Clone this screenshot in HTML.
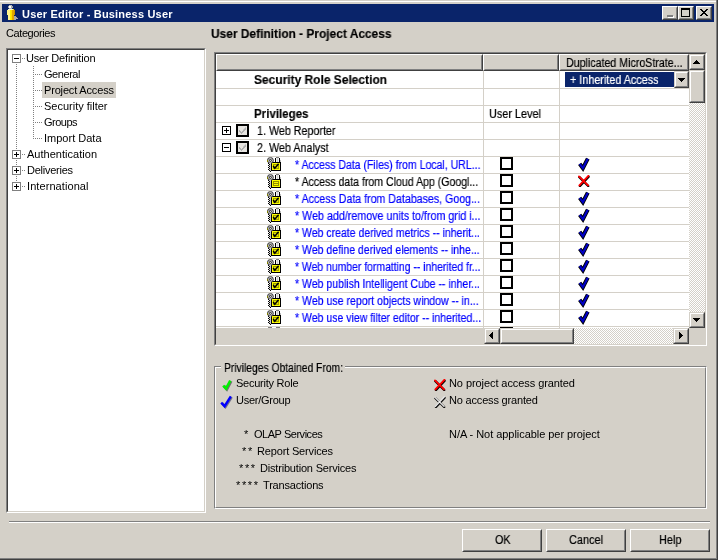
<!DOCTYPE html>
<html><head><meta charset="utf-8"><title>User Editor - Business User</title>
<style>
html,body{margin:0;padding:0;background:#fff;}
body{width:721px;height:560px;overflow:hidden;position:relative;font-family:"Liberation Sans",sans-serif;font-size:11px;color:#000;}
div,span,svg{position:absolute;box-sizing:border-box;}
.t{white-space:pre;line-height:16px;height:16px;will-change:transform;}
.ms{font-size:12.5px;-webkit-text-stroke:0.2px;}
.b{font-weight:bold;-webkit-text-stroke:0;}
.ms.b{-webkit-text-stroke:0.15px;}
.sunk{border:1px solid;border-color:#808080 #ffffff #ffffff #808080;}
.sunk>.in{left:0;top:0;right:0;bottom:0;border:1px solid;border-color:#404040 #d4d0c8 #d4d0c8 #404040;background:#fff;}
.btn{background:#d4d0c8;border:1px solid;border-color:#ffffff #404040 #404040 #ffffff;}
.btn>.in{left:0;top:0;right:0;bottom:0;border:1px solid;border-color:#d4d0c8 #808080 #808080 #d4d0c8;}
.sb{background:#d4d0c8;border:1px solid;border-color:#d4d0c8 #404040 #404040 #d4d0c8;}
.sb>.in{left:0;top:0;right:0;bottom:0;border:1px solid;border-color:#ffffff #808080 #808080 #ffffff;}
.trk{background:repeating-conic-gradient(#ffffff 0% 25%,#d4d0c8 0% 50%) 0 0/2px 2px;}
.hl{background:#d4d0c8;}
.vd{width:1px;background:repeating-linear-gradient(to bottom,#808080 0 1px,transparent 1px 2px);}
.hd{height:1px;background:repeating-linear-gradient(to right,#808080 0 1px,transparent 1px 2px);}
.gl{background:#d4d0c8;}
.hc{background:#d4d0c8;border:1px solid;border-color:#ffffff #404040 #404040 #ffffff;}
.hc>.in{left:0;top:0;right:0;bottom:0;border:1px solid;border-color:#d4d0c8 #808080 #808080 #d4d0c8;}
.cb{width:13px;height:13px;border:2px solid #000;background:#fff;}
.pm{width:9px;height:9px;border:1px solid #808080;background:#fff;}
.pm i{position:absolute;background:#000;}
.blue{color:#0000ff;}
</style></head>
<body>
<div style="left:0;top:0;width:718px;height:560px;background:#d4d0c8;"></div>
<div style="left:0;top:1px;width:716px;height:1px;background:#ffffff;"></div>
<div style="left:716px;top:0;width:1px;height:559px;background:#808080;"></div>
<div style="left:717px;top:0;width:1px;height:560px;background:#404040;"></div>
<div style="left:0;top:558px;width:717px;height:1px;background:#808080;"></div>
<div style="left:0;top:559px;width:718px;height:1px;background:#404040;"></div>
<div style="left:2px;top:4px;width:712px;height:18px;background:#0a246a;"></div>
<svg style="left:6px;top:4px" width="14" height="18" viewBox="0 0 14 18" shape-rendering="crispEdges">
<rect x="2" y="5" width="6" height="11" fill="#ffe000"/>
<rect x="2" y="5" width="2" height="11" fill="#fff48a"/>
<rect x="4" y="6" width="1" height="10" fill="#fff000"/>
<rect x="6" y="6" width="2" height="10" fill="#e0a800"/>
<rect x="1" y="6" width="1" height="5" fill="#fff48a"/>
<rect x="8" y="6" width="1" height="5" fill="#c89000"/>
<rect x="2" y="5" width="5" height="1" fill="#fffbd0"/>
<rect x="3" y="1" width="3" height="4" fill="#b8b8b8"/>
<rect x="2" y="2" width="5" height="2" fill="#a8a8a8"/>
<rect x="3" y="2" width="2" height="2" fill="#ffffff"/>
<path d="M8 12h1v4h-1zM9 12h1v4h-1zM10 13h1v2h-1zM11 13.5h1v1h-1z" fill="#a8a8a8"/>
</svg>
<div class="t b" style="left:22px;top:6px;color:#fff;letter-spacing:0.192px;">User Editor - Business User</div>
<div class="btn" style="left:662px;top:6px;width:16px;height:14px;"><div class="in"></div><div style="left:5px;top:9px;width:6px;height:2px;background:#ffffff;"></div><div style="left:4px;top:8px;width:6px;height:2px;background:#808080;"></div></div>
<div class="btn" style="left:678px;top:6px;width:16px;height:14px;"><div class="in"></div><div style="left:2px;top:1px;width:9px;height:9px;border:1px solid #000;border-top-width:2px;"></div></div>
<div class="btn" style="left:696px;top:6px;width:16px;height:14px;"><div class="in"></div><svg style="left:3px;top:2px" width="8" height="7" viewBox="0 0 8 7" shape-rendering="crispEdges"><path d="M0 0h2v1h-2zM6 0h2v1h-2zM1 1h2v1h-2zM5 1h2v1h-2zM2 2h4v1h-4zM3 3h2v1h-2zM2 4h4v1h-4zM1 5h2v1h-2zM5 5h2v1h-2zM0 6h2v1h-2zM6 6h2v1h-2z" fill="#000"/></svg></div>
<div class="t " style="left:6.2px;top:25px;letter-spacing:-0.411px;">Categories</div>
<div class="sunk" style="left:6px;top:48px;width:200px;height:465px;"><div class="in"></div></div>
<div class="vd" style="left:16px;top:64px;height:122px;"></div>
<div class="vd" style="left:33px;top:66px;height:73px;"></div>
<div class="hd" style="left:22px;top:58px;width:4px;"></div>
<div class="hd" style="left:35px;top:74px;width:8px;"></div>
<div class="hd" style="left:35px;top:90px;width:8px;"></div>
<div class="hd" style="left:35px;top:106px;width:8px;"></div>
<div class="hd" style="left:35px;top:122px;width:8px;"></div>
<div class="hd" style="left:35px;top:138px;width:8px;"></div>
<div class="hd" style="left:22px;top:154px;width:4px;"></div>
<div class="hd" style="left:22px;top:170px;width:4px;"></div>
<div class="hd" style="left:22px;top:186px;width:4px;"></div>
<div class="pm" style="left:12px;top:54px;border-color:#808080;"><i style="left:1px;top:3px;width:5px;height:1px;"></i></div>
<div class="pm" style="left:12px;top:150px;border-color:#808080;"><i style="left:1px;top:3px;width:5px;height:1px;"></i><i style="left:3px;top:1px;width:1px;height:5px;"></i></div>
<div class="pm" style="left:12px;top:166px;border-color:#808080;"><i style="left:1px;top:3px;width:5px;height:1px;"></i><i style="left:3px;top:1px;width:1px;height:5px;"></i></div>
<div class="pm" style="left:12px;top:182px;border-color:#808080;"><i style="left:1px;top:3px;width:5px;height:1px;"></i><i style="left:3px;top:1px;width:1px;height:5px;"></i></div>
<div class="hl" style="left:42px;top:82px;width:74px;height:16px;"></div>
<div class="t " style="left:26px;top:50px;letter-spacing:-0.189px;">User Definition</div>
<div class="t " style="left:44px;top:66px;letter-spacing:-0.440px;">General</div>
<div class="t " style="left:44px;top:82px;letter-spacing:-0.165px;">Project Access</div>
<div class="t " style="left:44px;top:98px;letter-spacing:-0.006px;">Security filter</div>
<div class="t " style="left:44px;top:114px;letter-spacing:-0.516px;">Groups</div>
<div class="t " style="left:44px;top:130px;letter-spacing:0.003px;">Import Data</div>
<div class="t " style="left:26.5px;top:146px;letter-spacing:0.022px;">Authentication</div>
<div class="t " style="left:26.5px;top:162px;letter-spacing:-0.255px;">Deliveries</div>
<div class="t " style="left:26.5px;top:178px;letter-spacing:0.079px;">International</div>
<div class="t ms b" style="left:211px;top:26px;transform:scaleX(0.9541);transform-origin:0 0;">User Definition - Project Access</div>
<div class="sunk" style="left:214px;top:52px;width:493px;height:294px;"><div class="in"></div></div>
<div class="hc" style="left:216px;top:54px;width:267px;height:17px;"><div class="in"></div></div>
<div class="hc" style="left:483px;top:54px;width:76px;height:17px;"><div class="in"></div></div>
<div class="hc" style="left:559px;top:54px;width:130px;height:17px;"><div class="in"></div></div>
<div class="t ms" style="left:566px;top:55px;transform:scaleX(0.8512);transform-origin:0 0;">Duplicated MicroStrate...</div>
<div class="gl" style="left:216px;top:88px;width:473px;height:1px;"></div>
<div class="gl" style="left:216px;top:105px;width:473px;height:1px;"></div>
<div class="gl" style="left:216px;top:122px;width:473px;height:1px;"></div>
<div class="gl" style="left:216px;top:139px;width:473px;height:1px;"></div>
<div class="gl" style="left:216px;top:156px;width:473px;height:1px;"></div>
<div class="gl" style="left:216px;top:173px;width:473px;height:1px;"></div>
<div class="gl" style="left:216px;top:190px;width:473px;height:1px;"></div>
<div class="gl" style="left:216px;top:207px;width:473px;height:1px;"></div>
<div class="gl" style="left:216px;top:224px;width:473px;height:1px;"></div>
<div class="gl" style="left:216px;top:241px;width:473px;height:1px;"></div>
<div class="gl" style="left:216px;top:258px;width:473px;height:1px;"></div>
<div class="gl" style="left:216px;top:275px;width:473px;height:1px;"></div>
<div class="gl" style="left:216px;top:292px;width:473px;height:1px;"></div>
<div class="gl" style="left:216px;top:309px;width:473px;height:1px;"></div>
<div class="gl" style="left:216px;top:326px;width:473px;height:1px;"></div>
<div class="gl" style="left:483px;top:71px;width:1px;height:257px;"></div>
<div class="gl" style="left:559px;top:71px;width:1px;height:257px;"></div>
<div style="left:216px;top:328px;width:489px;height:16px;background:#d4d0c8;"></div>
<div class="t ms b" style="left:254px;top:72px;transform:scaleX(0.9573);transform-origin:0 0;">Security Role Selection</div>
<div style="left:565px;top:72px;width:109px;height:15px;background:#0a246a;"></div>
<div class="t ms" style="left:570px;top:72px;color:#fff;transform:scaleX(0.8634);transform-origin:0 0;">+ Inherited Access</div>
<div class="sb" style="left:674px;top:71px;width:15px;height:17px;"><div class="in"></div><svg style="left:3px;top:6px" width="7" height="4" viewBox="0 0 7 4" shape-rendering="crispEdges"><path d="M0 0h7v1h-7zM1 1h5v1h-5zM2 2h3v1h-3zM3 3h1v1h-1z" fill="#000"/></svg></div>
<div class="t ms b" style="left:254px;top:106px;transform:scaleX(0.9225);transform-origin:0 0;">Privileges</div>
<div class="t ms" style="left:489px;top:106px;transform:scaleX(0.8703);transform-origin:0 0;">User Level</div>
<div class="pm" style="left:222px;top:126px;border-color:#000;"><i style="left:1px;top:3px;width:5px;height:1px;"></i><i style="left:3px;top:1px;width:1px;height:5px;"></i></div>
<div style="left:236px;top:124px;width:13px;height:13px;border:2px solid #000;background:#e6e4e0;"><svg style="left:1px;top:1px" width="7" height="7" viewBox="0 0 7 7" shape-rendering="crispEdges"><path d="M0 3h1v2h-1zM1 4h1v2h-1zM2 5h1v2h-1zM3 4h1v2h-1zM4 3h1v2h-1zM5 2h1v2h-1zM6 1h1v2h-1z" fill="#b0b0b0"/><path d="M6 0h1v1h-1zM5 1h1v1h-1zM4 2h1v1h-1z" fill="#c8c8c8"/></svg></div>
<div class="t ms" style="left:257px;top:123px;transform:scaleX(0.8581);transform-origin:0 0;">1. Web Reporter</div>
<div class="pm" style="left:222px;top:143px;border-color:#000;"><i style="left:1px;top:3px;width:5px;height:1px;"></i></div>
<div style="left:236px;top:141px;width:13px;height:13px;border:2px solid #000;background:#e6e4e0;"><svg style="left:1px;top:1px" width="7" height="7" viewBox="0 0 7 7" shape-rendering="crispEdges"><path d="M0 3h1v2h-1zM1 4h1v2h-1zM2 5h1v2h-1zM3 4h1v2h-1zM4 3h1v2h-1zM5 2h1v2h-1zM6 1h1v2h-1z" fill="#b0b0b0"/><path d="M6 0h1v1h-1zM5 1h1v1h-1zM4 2h1v1h-1z" fill="#c8c8c8"/></svg></div>
<div class="t ms" style="left:257px;top:140px;transform:scaleX(0.8598);transform-origin:0 0;">2. Web Analyst</div>
<svg style="left:267px;top:156px" width="16" height="16" viewBox="0 0 16 16" shape-rendering="crispEdges">
<rect x="9" y="2" width="3" height="5" fill="#f4f4f4"/><rect x="10" y="2" width="1" height="4" fill="#d0d0d0"/>
<rect x="9" y="1" width="3" height="1" fill="#808080"/>
<rect x="8" y="2" width="1" height="5" fill="#000"/><rect x="12" y="2" width="1" height="5" fill="#000"/><rect x="13" y="4" width="1" height="3" fill="#c0c0c0"/>
<rect x="4" y="6" width="10" height="9" fill="#000"/>
<rect x="5" y="7" width="8" height="7" fill="#ffff00"/>
<rect x="6.5" y="8.5" width="5" height="4" fill="#e8e800" stroke="#a0a000" stroke-width="1"/><path d="M6.2 10 L7.8 12.2 L11.6 7.8" fill="none" stroke="#000" stroke-width="1.5" shape-rendering="auto"/>
<g shape-rendering="auto"><circle cx="3.4" cy="4.4" r="2.9" fill="#c8c8c8" stroke="#202020" stroke-width="0.9"/><circle cx="3.4" cy="4.4" r="1.0" fill="#fff" stroke="#000" stroke-width="0.8"/></g>
<rect x="2" y="1" width="3" height="1" fill="#808080"/>
<rect x="0" y="4" width="1" height="2" fill="#808000"/>
<rect x="2" y="7" width="2" height="8" fill="#c8c8c8"/>
<path d="M1 7h1v1h-1zM2 8h1v1h-1zM1 9h1v1h-1zM2 10h1v1h-1zM1 11h1v1h-1zM2 12h1v1h-1zM1 13h1v1h-1zM2 14h1v1h-1zM3 15h1v1h-1z" fill="#000"/>
</svg>
<div class="t ms blue" style="left:294.6px;top:157px;transform:scaleX(0.8424);transform-origin:0 0;">* Access Data (Files) from Local, URL...</div>
<div class="cb" style="left:500px;top:157px;"></div>
<svg style="left:577.5px;top:157.3px" width="13" height="15" viewBox="0 0 13 15"><path d="M1.7 6.9 L4.9 11.2 L9.8 1.7" fill="none" stroke="#000" stroke-width="4.0" stroke-linejoin="miter" stroke-miterlimit="3"/><path d="M1.7 6.9 L4.9 11.2 L9.8 1.7" fill="none" stroke="#0000c4" stroke-width="2.2" stroke-linejoin="miter" stroke-miterlimit="3"/></svg>
<svg style="left:267px;top:173px" width="16" height="16" viewBox="0 0 16 16" shape-rendering="crispEdges">
<rect x="9" y="2" width="3" height="5" fill="#f4f4f4"/><rect x="10" y="2" width="1" height="4" fill="#d0d0d0"/>
<rect x="9" y="1" width="3" height="1" fill="#808080"/>
<rect x="8" y="2" width="1" height="5" fill="#000"/><rect x="12" y="2" width="1" height="5" fill="#000"/><rect x="13" y="4" width="1" height="3" fill="#c0c0c0"/>
<rect x="4" y="6" width="10" height="9" fill="#000"/>
<rect x="5" y="7" width="8" height="7" fill="#ffff00"/>
<rect x="6.5" y="8.5" width="5" height="4" fill="#ffff00" stroke="#909000" stroke-width="1"/><rect x="7" y="10" width="4" height="1" fill="#909000"/>
<g shape-rendering="auto"><circle cx="3.4" cy="4.4" r="2.9" fill="#c8c8c8" stroke="#202020" stroke-width="0.9"/><circle cx="3.4" cy="4.4" r="1.0" fill="#fff" stroke="#000" stroke-width="0.8"/></g>
<rect x="2" y="1" width="3" height="1" fill="#808080"/>
<rect x="0" y="4" width="1" height="2" fill="#808000"/>
<rect x="2" y="7" width="2" height="8" fill="#c8c8c8"/>
<path d="M1 7h1v1h-1zM2 8h1v1h-1zM1 9h1v1h-1zM2 10h1v1h-1zM1 11h1v1h-1zM2 12h1v1h-1zM1 13h1v1h-1zM2 14h1v1h-1zM3 15h1v1h-1z" fill="#000"/>
</svg>
<div class="t ms" style="left:294.6px;top:174px;transform:scaleX(0.8451);transform-origin:0 0;">* Access data from Cloud App (Googl...</div>
<div class="cb" style="left:500px;top:174px;"></div>
<svg style="left:577.5px;top:175px" width="12" height="12" viewBox="0 0 12 12">
<path d="M1.4 2.2 L10.2 11 M10.6 1.8 L2 11" stroke="#000" stroke-width="2.4" stroke-linecap="round"/>
<path d="M1 1.4 L10 10.4 M10.4 0.8 L1.4 10.4" stroke="#ff0000" stroke-width="1.9" stroke-linecap="round"/></svg>
<svg style="left:267px;top:190px" width="16" height="16" viewBox="0 0 16 16" shape-rendering="crispEdges">
<rect x="9" y="2" width="3" height="5" fill="#f4f4f4"/><rect x="10" y="2" width="1" height="4" fill="#d0d0d0"/>
<rect x="9" y="1" width="3" height="1" fill="#808080"/>
<rect x="8" y="2" width="1" height="5" fill="#000"/><rect x="12" y="2" width="1" height="5" fill="#000"/><rect x="13" y="4" width="1" height="3" fill="#c0c0c0"/>
<rect x="4" y="6" width="10" height="9" fill="#000"/>
<rect x="5" y="7" width="8" height="7" fill="#ffff00"/>
<rect x="6.5" y="8.5" width="5" height="4" fill="#e8e800" stroke="#a0a000" stroke-width="1"/><path d="M6.2 10 L7.8 12.2 L11.6 7.8" fill="none" stroke="#000" stroke-width="1.5" shape-rendering="auto"/>
<g shape-rendering="auto"><circle cx="3.4" cy="4.4" r="2.9" fill="#c8c8c8" stroke="#202020" stroke-width="0.9"/><circle cx="3.4" cy="4.4" r="1.0" fill="#fff" stroke="#000" stroke-width="0.8"/></g>
<rect x="2" y="1" width="3" height="1" fill="#808080"/>
<rect x="0" y="4" width="1" height="2" fill="#808000"/>
<rect x="2" y="7" width="2" height="8" fill="#c8c8c8"/>
<path d="M1 7h1v1h-1zM2 8h1v1h-1zM1 9h1v1h-1zM2 10h1v1h-1zM1 11h1v1h-1zM2 12h1v1h-1zM1 13h1v1h-1zM2 14h1v1h-1zM3 15h1v1h-1z" fill="#000"/>
</svg>
<div class="t ms blue" style="left:294.6px;top:191px;transform:scaleX(0.8502);transform-origin:0 0;">* Access Data from Databases, Goog...</div>
<div class="cb" style="left:500px;top:191px;"></div>
<svg style="left:577.5px;top:191.3px" width="13" height="15" viewBox="0 0 13 15"><path d="M1.7 6.9 L4.9 11.2 L9.8 1.7" fill="none" stroke="#000" stroke-width="4.0" stroke-linejoin="miter" stroke-miterlimit="3"/><path d="M1.7 6.9 L4.9 11.2 L9.8 1.7" fill="none" stroke="#0000c4" stroke-width="2.2" stroke-linejoin="miter" stroke-miterlimit="3"/></svg>
<svg style="left:267px;top:207px" width="16" height="16" viewBox="0 0 16 16" shape-rendering="crispEdges">
<rect x="9" y="2" width="3" height="5" fill="#f4f4f4"/><rect x="10" y="2" width="1" height="4" fill="#d0d0d0"/>
<rect x="9" y="1" width="3" height="1" fill="#808080"/>
<rect x="8" y="2" width="1" height="5" fill="#000"/><rect x="12" y="2" width="1" height="5" fill="#000"/><rect x="13" y="4" width="1" height="3" fill="#c0c0c0"/>
<rect x="4" y="6" width="10" height="9" fill="#000"/>
<rect x="5" y="7" width="8" height="7" fill="#ffff00"/>
<rect x="6.5" y="8.5" width="5" height="4" fill="#e8e800" stroke="#a0a000" stroke-width="1"/><path d="M6.2 10 L7.8 12.2 L11.6 7.8" fill="none" stroke="#000" stroke-width="1.5" shape-rendering="auto"/>
<g shape-rendering="auto"><circle cx="3.4" cy="4.4" r="2.9" fill="#c8c8c8" stroke="#202020" stroke-width="0.9"/><circle cx="3.4" cy="4.4" r="1.0" fill="#fff" stroke="#000" stroke-width="0.8"/></g>
<rect x="2" y="1" width="3" height="1" fill="#808080"/>
<rect x="0" y="4" width="1" height="2" fill="#808000"/>
<rect x="2" y="7" width="2" height="8" fill="#c8c8c8"/>
<path d="M1 7h1v1h-1zM2 8h1v1h-1zM1 9h1v1h-1zM2 10h1v1h-1zM1 11h1v1h-1zM2 12h1v1h-1zM1 13h1v1h-1zM2 14h1v1h-1zM3 15h1v1h-1z" fill="#000"/>
</svg>
<div class="t ms blue" style="left:294.6px;top:208px;transform:scaleX(0.8567);transform-origin:0 0;">* Web add/remove units to/from grid i...</div>
<div class="cb" style="left:500px;top:208px;"></div>
<svg style="left:577.5px;top:208.3px" width="13" height="15" viewBox="0 0 13 15"><path d="M1.7 6.9 L4.9 11.2 L9.8 1.7" fill="none" stroke="#000" stroke-width="4.0" stroke-linejoin="miter" stroke-miterlimit="3"/><path d="M1.7 6.9 L4.9 11.2 L9.8 1.7" fill="none" stroke="#0000c4" stroke-width="2.2" stroke-linejoin="miter" stroke-miterlimit="3"/></svg>
<svg style="left:267px;top:224px" width="16" height="16" viewBox="0 0 16 16" shape-rendering="crispEdges">
<rect x="9" y="2" width="3" height="5" fill="#f4f4f4"/><rect x="10" y="2" width="1" height="4" fill="#d0d0d0"/>
<rect x="9" y="1" width="3" height="1" fill="#808080"/>
<rect x="8" y="2" width="1" height="5" fill="#000"/><rect x="12" y="2" width="1" height="5" fill="#000"/><rect x="13" y="4" width="1" height="3" fill="#c0c0c0"/>
<rect x="4" y="6" width="10" height="9" fill="#000"/>
<rect x="5" y="7" width="8" height="7" fill="#ffff00"/>
<rect x="6.5" y="8.5" width="5" height="4" fill="#e8e800" stroke="#a0a000" stroke-width="1"/><path d="M6.2 10 L7.8 12.2 L11.6 7.8" fill="none" stroke="#000" stroke-width="1.5" shape-rendering="auto"/>
<g shape-rendering="auto"><circle cx="3.4" cy="4.4" r="2.9" fill="#c8c8c8" stroke="#202020" stroke-width="0.9"/><circle cx="3.4" cy="4.4" r="1.0" fill="#fff" stroke="#000" stroke-width="0.8"/></g>
<rect x="2" y="1" width="3" height="1" fill="#808080"/>
<rect x="0" y="4" width="1" height="2" fill="#808000"/>
<rect x="2" y="7" width="2" height="8" fill="#c8c8c8"/>
<path d="M1 7h1v1h-1zM2 8h1v1h-1zM1 9h1v1h-1zM2 10h1v1h-1zM1 11h1v1h-1zM2 12h1v1h-1zM1 13h1v1h-1zM2 14h1v1h-1zM3 15h1v1h-1z" fill="#000"/>
</svg>
<div class="t ms blue" style="left:294.6px;top:225px;transform:scaleX(0.8405);transform-origin:0 0;">* Web create derived metrics -- inherit...</div>
<div class="cb" style="left:500px;top:225px;"></div>
<svg style="left:577.5px;top:225.3px" width="13" height="15" viewBox="0 0 13 15"><path d="M1.7 6.9 L4.9 11.2 L9.8 1.7" fill="none" stroke="#000" stroke-width="4.0" stroke-linejoin="miter" stroke-miterlimit="3"/><path d="M1.7 6.9 L4.9 11.2 L9.8 1.7" fill="none" stroke="#0000c4" stroke-width="2.2" stroke-linejoin="miter" stroke-miterlimit="3"/></svg>
<svg style="left:267px;top:241px" width="16" height="16" viewBox="0 0 16 16" shape-rendering="crispEdges">
<rect x="9" y="2" width="3" height="5" fill="#f4f4f4"/><rect x="10" y="2" width="1" height="4" fill="#d0d0d0"/>
<rect x="9" y="1" width="3" height="1" fill="#808080"/>
<rect x="8" y="2" width="1" height="5" fill="#000"/><rect x="12" y="2" width="1" height="5" fill="#000"/><rect x="13" y="4" width="1" height="3" fill="#c0c0c0"/>
<rect x="4" y="6" width="10" height="9" fill="#000"/>
<rect x="5" y="7" width="8" height="7" fill="#ffff00"/>
<rect x="6.5" y="8.5" width="5" height="4" fill="#e8e800" stroke="#a0a000" stroke-width="1"/><path d="M6.2 10 L7.8 12.2 L11.6 7.8" fill="none" stroke="#000" stroke-width="1.5" shape-rendering="auto"/>
<g shape-rendering="auto"><circle cx="3.4" cy="4.4" r="2.9" fill="#c8c8c8" stroke="#202020" stroke-width="0.9"/><circle cx="3.4" cy="4.4" r="1.0" fill="#fff" stroke="#000" stroke-width="0.8"/></g>
<rect x="2" y="1" width="3" height="1" fill="#808080"/>
<rect x="0" y="4" width="1" height="2" fill="#808000"/>
<rect x="2" y="7" width="2" height="8" fill="#c8c8c8"/>
<path d="M1 7h1v1h-1zM2 8h1v1h-1zM1 9h1v1h-1zM2 10h1v1h-1zM1 11h1v1h-1zM2 12h1v1h-1zM1 13h1v1h-1zM2 14h1v1h-1zM3 15h1v1h-1z" fill="#000"/>
</svg>
<div class="t ms blue" style="left:294.6px;top:242px;transform:scaleX(0.8416);transform-origin:0 0;">* Web define derived elements -- inhe...</div>
<div class="cb" style="left:500px;top:242px;"></div>
<svg style="left:577.5px;top:242.3px" width="13" height="15" viewBox="0 0 13 15"><path d="M1.7 6.9 L4.9 11.2 L9.8 1.7" fill="none" stroke="#000" stroke-width="4.0" stroke-linejoin="miter" stroke-miterlimit="3"/><path d="M1.7 6.9 L4.9 11.2 L9.8 1.7" fill="none" stroke="#0000c4" stroke-width="2.2" stroke-linejoin="miter" stroke-miterlimit="3"/></svg>
<svg style="left:267px;top:258px" width="16" height="16" viewBox="0 0 16 16" shape-rendering="crispEdges">
<rect x="9" y="2" width="3" height="5" fill="#f4f4f4"/><rect x="10" y="2" width="1" height="4" fill="#d0d0d0"/>
<rect x="9" y="1" width="3" height="1" fill="#808080"/>
<rect x="8" y="2" width="1" height="5" fill="#000"/><rect x="12" y="2" width="1" height="5" fill="#000"/><rect x="13" y="4" width="1" height="3" fill="#c0c0c0"/>
<rect x="4" y="6" width="10" height="9" fill="#000"/>
<rect x="5" y="7" width="8" height="7" fill="#ffff00"/>
<rect x="6.5" y="8.5" width="5" height="4" fill="#e8e800" stroke="#a0a000" stroke-width="1"/><path d="M6.2 10 L7.8 12.2 L11.6 7.8" fill="none" stroke="#000" stroke-width="1.5" shape-rendering="auto"/>
<g shape-rendering="auto"><circle cx="3.4" cy="4.4" r="2.9" fill="#c8c8c8" stroke="#202020" stroke-width="0.9"/><circle cx="3.4" cy="4.4" r="1.0" fill="#fff" stroke="#000" stroke-width="0.8"/></g>
<rect x="2" y="1" width="3" height="1" fill="#808080"/>
<rect x="0" y="4" width="1" height="2" fill="#808000"/>
<rect x="2" y="7" width="2" height="8" fill="#c8c8c8"/>
<path d="M1 7h1v1h-1zM2 8h1v1h-1zM1 9h1v1h-1zM2 10h1v1h-1zM1 11h1v1h-1zM2 12h1v1h-1zM1 13h1v1h-1zM2 14h1v1h-1zM3 15h1v1h-1z" fill="#000"/>
</svg>
<div class="t ms blue" style="left:294.6px;top:259px;transform:scaleX(0.8327);transform-origin:0 0;">* Web number formatting -- inherited fr...</div>
<div class="cb" style="left:500px;top:259px;"></div>
<svg style="left:577.5px;top:259.3px" width="13" height="15" viewBox="0 0 13 15"><path d="M1.7 6.9 L4.9 11.2 L9.8 1.7" fill="none" stroke="#000" stroke-width="4.0" stroke-linejoin="miter" stroke-miterlimit="3"/><path d="M1.7 6.9 L4.9 11.2 L9.8 1.7" fill="none" stroke="#0000c4" stroke-width="2.2" stroke-linejoin="miter" stroke-miterlimit="3"/></svg>
<svg style="left:267px;top:275px" width="16" height="16" viewBox="0 0 16 16" shape-rendering="crispEdges">
<rect x="9" y="2" width="3" height="5" fill="#f4f4f4"/><rect x="10" y="2" width="1" height="4" fill="#d0d0d0"/>
<rect x="9" y="1" width="3" height="1" fill="#808080"/>
<rect x="8" y="2" width="1" height="5" fill="#000"/><rect x="12" y="2" width="1" height="5" fill="#000"/><rect x="13" y="4" width="1" height="3" fill="#c0c0c0"/>
<rect x="4" y="6" width="10" height="9" fill="#000"/>
<rect x="5" y="7" width="8" height="7" fill="#ffff00"/>
<rect x="6.5" y="8.5" width="5" height="4" fill="#e8e800" stroke="#a0a000" stroke-width="1"/><path d="M6.2 10 L7.8 12.2 L11.6 7.8" fill="none" stroke="#000" stroke-width="1.5" shape-rendering="auto"/>
<g shape-rendering="auto"><circle cx="3.4" cy="4.4" r="2.9" fill="#c8c8c8" stroke="#202020" stroke-width="0.9"/><circle cx="3.4" cy="4.4" r="1.0" fill="#fff" stroke="#000" stroke-width="0.8"/></g>
<rect x="2" y="1" width="3" height="1" fill="#808080"/>
<rect x="0" y="4" width="1" height="2" fill="#808000"/>
<rect x="2" y="7" width="2" height="8" fill="#c8c8c8"/>
<path d="M1 7h1v1h-1zM2 8h1v1h-1zM1 9h1v1h-1zM2 10h1v1h-1zM1 11h1v1h-1zM2 12h1v1h-1zM1 13h1v1h-1zM2 14h1v1h-1zM3 15h1v1h-1z" fill="#000"/>
</svg>
<div class="t ms blue" style="left:294.6px;top:276px;transform:scaleX(0.8403);transform-origin:0 0;">* Web publish Intelligent Cube -- inher...</div>
<div class="cb" style="left:500px;top:276px;"></div>
<svg style="left:577.5px;top:276.3px" width="13" height="15" viewBox="0 0 13 15"><path d="M1.7 6.9 L4.9 11.2 L9.8 1.7" fill="none" stroke="#000" stroke-width="4.0" stroke-linejoin="miter" stroke-miterlimit="3"/><path d="M1.7 6.9 L4.9 11.2 L9.8 1.7" fill="none" stroke="#0000c4" stroke-width="2.2" stroke-linejoin="miter" stroke-miterlimit="3"/></svg>
<svg style="left:267px;top:292px" width="16" height="16" viewBox="0 0 16 16" shape-rendering="crispEdges">
<rect x="9" y="2" width="3" height="5" fill="#f4f4f4"/><rect x="10" y="2" width="1" height="4" fill="#d0d0d0"/>
<rect x="9" y="1" width="3" height="1" fill="#808080"/>
<rect x="8" y="2" width="1" height="5" fill="#000"/><rect x="12" y="2" width="1" height="5" fill="#000"/><rect x="13" y="4" width="1" height="3" fill="#c0c0c0"/>
<rect x="4" y="6" width="10" height="9" fill="#000"/>
<rect x="5" y="7" width="8" height="7" fill="#ffff00"/>
<rect x="6.5" y="8.5" width="5" height="4" fill="#e8e800" stroke="#a0a000" stroke-width="1"/><path d="M6.2 10 L7.8 12.2 L11.6 7.8" fill="none" stroke="#000" stroke-width="1.5" shape-rendering="auto"/>
<g shape-rendering="auto"><circle cx="3.4" cy="4.4" r="2.9" fill="#c8c8c8" stroke="#202020" stroke-width="0.9"/><circle cx="3.4" cy="4.4" r="1.0" fill="#fff" stroke="#000" stroke-width="0.8"/></g>
<rect x="2" y="1" width="3" height="1" fill="#808080"/>
<rect x="0" y="4" width="1" height="2" fill="#808000"/>
<rect x="2" y="7" width="2" height="8" fill="#c8c8c8"/>
<path d="M1 7h1v1h-1zM2 8h1v1h-1zM1 9h1v1h-1zM2 10h1v1h-1zM1 11h1v1h-1zM2 12h1v1h-1zM1 13h1v1h-1zM2 14h1v1h-1zM3 15h1v1h-1z" fill="#000"/>
</svg>
<div class="t ms blue" style="left:294.6px;top:293px;transform:scaleX(0.8456);transform-origin:0 0;">* Web use report objects window -- in...</div>
<div class="cb" style="left:500px;top:293px;"></div>
<svg style="left:577.5px;top:293.3px" width="13" height="15" viewBox="0 0 13 15"><path d="M1.7 6.9 L4.9 11.2 L9.8 1.7" fill="none" stroke="#000" stroke-width="4.0" stroke-linejoin="miter" stroke-miterlimit="3"/><path d="M1.7 6.9 L4.9 11.2 L9.8 1.7" fill="none" stroke="#0000c4" stroke-width="2.2" stroke-linejoin="miter" stroke-miterlimit="3"/></svg>
<svg style="left:267px;top:309px" width="16" height="16" viewBox="0 0 16 16" shape-rendering="crispEdges">
<rect x="9" y="2" width="3" height="5" fill="#f4f4f4"/><rect x="10" y="2" width="1" height="4" fill="#d0d0d0"/>
<rect x="9" y="1" width="3" height="1" fill="#808080"/>
<rect x="8" y="2" width="1" height="5" fill="#000"/><rect x="12" y="2" width="1" height="5" fill="#000"/><rect x="13" y="4" width="1" height="3" fill="#c0c0c0"/>
<rect x="4" y="6" width="10" height="9" fill="#000"/>
<rect x="5" y="7" width="8" height="7" fill="#ffff00"/>
<rect x="6.5" y="8.5" width="5" height="4" fill="#e8e800" stroke="#a0a000" stroke-width="1"/><path d="M6.2 10 L7.8 12.2 L11.6 7.8" fill="none" stroke="#000" stroke-width="1.5" shape-rendering="auto"/>
<g shape-rendering="auto"><circle cx="3.4" cy="4.4" r="2.9" fill="#c8c8c8" stroke="#202020" stroke-width="0.9"/><circle cx="3.4" cy="4.4" r="1.0" fill="#fff" stroke="#000" stroke-width="0.8"/></g>
<rect x="2" y="1" width="3" height="1" fill="#808080"/>
<rect x="0" y="4" width="1" height="2" fill="#808000"/>
<rect x="2" y="7" width="2" height="8" fill="#c8c8c8"/>
<path d="M1 7h1v1h-1zM2 8h1v1h-1zM1 9h1v1h-1zM2 10h1v1h-1zM1 11h1v1h-1zM2 12h1v1h-1zM1 13h1v1h-1zM2 14h1v1h-1zM3 15h1v1h-1z" fill="#000"/>
</svg>
<div class="t ms blue" style="left:294.6px;top:310px;transform:scaleX(0.8406);transform-origin:0 0;">* Web use view filter editor -- inherited...</div>
<div class="cb" style="left:500px;top:310px;"></div>
<svg style="left:577.5px;top:310.3px" width="13" height="15" viewBox="0 0 13 15"><path d="M1.7 6.9 L4.9 11.2 L9.8 1.7" fill="none" stroke="#000" stroke-width="4.0" stroke-linejoin="miter" stroke-miterlimit="3"/><path d="M1.7 6.9 L4.9 11.2 L9.8 1.7" fill="none" stroke="#0000c4" stroke-width="2.2" stroke-linejoin="miter" stroke-miterlimit="3"/></svg>
<div style="left:268px;top:327px;width:4px;height:1px;background:#808080;"></div><div style="left:276px;top:327px;width:4px;height:1px;background:#808080;"></div>
<div style="left:500px;top:327px;width:13px;height:1px;background:#000;"></div>
<div class="trk" style="left:689px;top:54px;width:16px;height:274px;"></div>
<div class="sb" style="left:689px;top:54px;width:16px;height:16px;"><div class="in"></div><svg style="left:3px;top:5px" width="7" height="4" viewBox="0 0 7 4" shape-rendering="crispEdges"><path d="M3 0h1v1h-1zM2 1h3v1h-3zM1 2h5v1h-5zM0 3h7v1h-7z" fill="#000"/></svg></div>
<div class="sb" style="left:689px;top:70px;width:16px;height:33px;"><div class="in"></div></div>
<div class="sb" style="left:689px;top:312px;width:16px;height:16px;"><div class="in"></div><svg style="left:3px;top:5px" width="7" height="4" viewBox="0 0 7 4" shape-rendering="crispEdges"><path d="M0 0h7v1h-7zM1 1h5v1h-5zM2 2h3v1h-3zM3 3h1v1h-1z" fill="#000"/></svg></div>
<div class="trk" style="left:484px;top:328px;width:205px;height:16px;"></div>
<div class="sb" style="left:484px;top:328px;width:16px;height:16px;"><div class="in"></div><svg style="left:4px;top:3px" width="4" height="7" viewBox="0 0 4 7" shape-rendering="crispEdges"><path d="M3 0h1v7h-1zM2 1h1v5h-1zM1 2h1v3h-1zM0 3h1v1h-1z" fill="#000"/></svg></div>
<div class="sb" style="left:500px;top:328px;width:74px;height:16px;"><div class="in"></div></div>
<div class="sb" style="left:673px;top:328px;width:16px;height:16px;"><div class="in"></div><svg style="left:5px;top:3px" width="4" height="7" viewBox="0 0 4 7" shape-rendering="crispEdges"><path d="M0 0h1v7h-1zM1 1h1v5h-1zM2 2h1v3h-1zM3 3h1v1h-1z" fill="#000"/></svg></div>
<div style="left:214px;top:366px;width:493px;height:143px;border:1px solid;border-color:#808080 #ffffff #ffffff #808080;"></div>
<div style="left:215px;top:367px;width:491px;height:141px;border:1px solid;border-color:#ffffff #808080 #808080 #ffffff;"></div>
<div style="left:221px;top:364px;width:124px;height:6px;background:#d4d0c8;"></div>
<div class="t ms" style="left:224px;top:360px;transform:scaleX(0.8234);transform-origin:0 0;">Privileges Obtained From:</div>
<svg style="left:220px;top:377px" width="20" height="20" viewBox="0 0 20 20"><path d="M3.2 8.6 L6.0 11.6 L10.3 3.6" transform="translate(0.8,0.5)" fill="none" stroke="#707070" stroke-width="3.0" stroke-linejoin="miter"/><path d="M3.2 8.6 L6.0 11.6 L10.3 3.6" fill="none" stroke="#00f000" stroke-width="2.6" stroke-linejoin="miter"/></svg>
<svg style="left:218px;top:393px" width="20" height="20" viewBox="0 0 20 20"><path d="M3.2 9.6 L6.6 13.2 L12.8 3.4" transform="translate(0.8,0.5)" fill="none" stroke="#707088" stroke-width="2.8" stroke-linejoin="miter"/><path d="M3.2 9.6 L6.6 13.2 L12.8 3.4" fill="none" stroke="#0000ff" stroke-width="2.4" stroke-linejoin="miter"/></svg>
<svg style="left:433.5px;top:378.5px" width="12" height="12" viewBox="0 0 12 12">
<path d="M1.4 2.2 L10.2 11 M10.6 1.8 L2 11" stroke="#000" stroke-width="2.4" stroke-linecap="round"/>
<path d="M1 1.4 L10 10.4 M10.4 0.8 L1.4 10.4" stroke="#ff0000" stroke-width="1.9" stroke-linecap="round"/></svg>
<svg style="left:433.5px;top:395.5px" width="12" height="12" viewBox="0 0 12 12">
<path d="M1.4 2.2 L10.2 11 M10.6 1.8 L2 11" stroke="#101010" stroke-width="2.3" stroke-linecap="round"/>
<path d="M1 1.4 L10 10.4 M10.4 0.8 L1.4 10.4" stroke="#f0f0f0" stroke-width="1.3" stroke-linecap="round"/></svg>
<div class="t " style="left:236px;top:375px;letter-spacing:-0.243px;">Security Role</div>
<div class="t " style="left:236px;top:392px;letter-spacing:-0.262px;">User/Group</div>
<div class="t " style="left:253.7px;top:426px;letter-spacing:-0.466px;">OLAP Services</div>
<div class="t " style="left:256.7px;top:443px;letter-spacing:-0.162px;">Report Services</div>
<div class="t " style="left:260px;top:460px;letter-spacing:-0.188px;">Distribution Services</div>
<div class="t " style="left:262.9px;top:477px;letter-spacing:-0.178px;">Transactions</div>
<div class="t " style="left:448.7px;top:375px;letter-spacing:-0.075px;">No project access granted</div>
<div class="t " style="left:448.7px;top:392px;letter-spacing:-0.182px;">No access granted</div>
<div class="t " style="left:448.7px;top:426px;letter-spacing:-0.047px;">N/A - Not applicable per project</div>
<div class="t " style="left:244.4px;top:426px;letter-spacing:1.6px;">*</div>
<div class="t " style="left:241.5px;top:443px;letter-spacing:1.6px;">**</div>
<div class="t " style="left:238.6px;top:460px;letter-spacing:1.6px;">***</div>
<div class="t " style="left:235.7px;top:477px;letter-spacing:1.6px;">****</div>
<div style="left:9px;top:521px;width:701px;height:1px;background:#808080;"></div>
<div style="left:9px;top:522px;width:701px;height:1px;background:#ffffff;"></div>
<div class="btn" style="left:462px;top:529px;width:80px;height:23px;"><div class="in"></div></div>
<div class="t ms" style="left:494.5px;top:532px;transform:scaleX(0.8581);transform-origin:0 0;">OK</div>
<div class="btn" style="left:546px;top:529px;width:80px;height:23px;"><div class="in"></div></div>
<div class="t ms" style="left:569.4px;top:532px;transform:scaleX(0.8735);transform-origin:0 0;">Cancel</div>
<div class="btn" style="left:630px;top:529px;width:80px;height:23px;"><div class="in"></div></div>
<div class="t ms" style="left:659px;top:532px;transform:scaleX(0.8748);transform-origin:0 0;">Help</div>
</body></html>
